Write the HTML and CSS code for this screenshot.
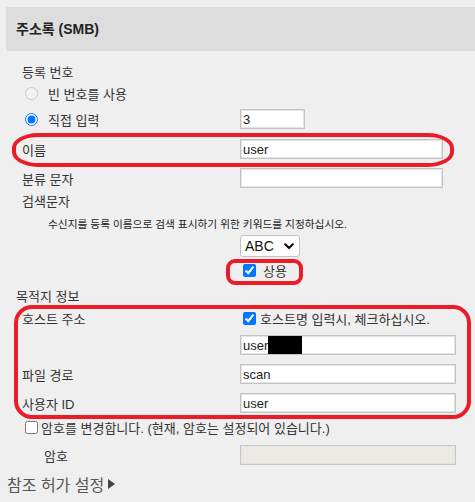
FILE: index.html
```html
<!DOCTYPE html>
<html lang="ko">
<head>
<meta charset="utf-8">
<title>주소록 (SMB)</title>
<link rel="stylesheet" href="styles.css">
</head>
<body>
<div class="page">
  <div class="header">주소록 (SMB)</div>

  <div class="row mt10"><span class="label">등록 번호</span></div>
  <div class="row mt2">
    <label class="opt"><input type="radio" name="num" disabled><span>빈 번호를 사용</span></label>
  </div>
  <div class="row mt6">
    <label class="opt"><input type="radio" name="num" checked><span>직접 입력</span></label>
    <input class="txt w-num" type="text" value="3">
  </div>
  <div class="row mt10">
    <span class="label">이름</span>
    <input class="txt w-mid" type="text" value="user">
  </div>
  <div class="row mt9">
    <span class="label">분류 문자</span>
    <input class="txt w-mid" type="text" value="">
  </div>
  <div class="row mt2"><span class="label">검색문자</span></div>
  <div class="row help mt4">수신지를 등록 이름으로 검색 표시하기 위한 키워드를 지정하십시오.</div>
  <div class="row sel-row mt3">
    <span class="label"></span>
    <div class="select"><span>ABC</span>
      <svg class="chev" width="10" height="7" viewBox="0 0 10 7"><path d="M1.2 1.3 L5 5 L8.8 1.3" fill="none" stroke="#111" stroke-width="2.2" stroke-linecap="round" stroke-linejoin="round"/></svg>
    </div>
  </div>
  <div class="row short mt4">
    <span class="label"></span>
    <label class="chk"><input type="checkbox" checked><span class="chk-text1">상용</span></label>
  </div>
  <div class="row section mt6"><span>목적지 정보</span></div>
  <div class="row mt3">
    <span class="label">호스트 주소</span>
    <label class="chk"><input type="checkbox" checked><span>호스트명 입력시, 체크하십시오.</span></label>
  </div>
  <div class="row mt7">
    <span class="label"></span>
    <div class="field"><input class="txt w-wide" type="text" value="user"><span class="redact"></span></div>
  </div>
  <div class="row mt9">
    <span class="label">파일 경로</span>
    <input class="txt w-wide" type="text" value="scan">
  </div>
  <div class="row mt9">
    <span class="label">사용자 ID</span>
    <input class="txt w-wide" type="text" value="user">
  </div>
  <div class="row short mt5">
    <label class="chk pw"><input type="checkbox"><span>암호를 변경합니다. (현재, 암호는 설정되어 있습니다.)</span></label>
  </div>
  <div class="row mt9">
    <span class="label sub">암호</span>
    <input class="txt w-wide" type="password" disabled>
  </div>
  <div class="row ref mt9"><span>참조 허가 설정</span><span class="tri"></span></div>

  <div class="mark mark-name"></div>
  <div class="mark mark-use"></div>
  <div class="mark mark-dest"></div>
</div>
</body>
</html>
```

FILE: styles.css
```css
html, body {
  margin: 0;
  padding: 0;
  background: #efefef;
}
body {
  font-family: "Liberation Sans", Arial, "Noto Sans CJK KR", sans-serif;
  font-size: 13px;
  color: #333;
}
.page {
  position: relative;
  width: 475px;
  height: 502px;
  overflow: hidden;
}
.header {
  margin: 7px 0 0 6px;
  height: 44px;
  line-height: 44px;
  padding-left: 10px;
  background: #dddddd;
  font-size: 14px;
  font-weight: bold;
  color: #222;
}
.row {
  display: flex;
  align-items: center;
  height: 20px;
  padding-left: 22px;
}
.row.short { height: 18px; }
.row.sel-row { height: 22px; }
.mt2 { margin-top: 2px; }
.mt3 { margin-top: 3px; }
.mt4 { margin-top: 4px; }
.mt5 { margin-top: 5px; }
.mt6 { margin-top: 6px; }
.mt7 { margin-top: 7px; }
.mt9 { margin-top: 9px; }
.mt10 { margin-top: 10px; }
.label {
  width: 218px;
  flex: none;
}
.label.sub { padding-left: 22px; box-sizing: border-box; }
.opt {
  width: 218px;
  flex: none;
  box-sizing: border-box;
  padding-left: 3px;
  display: flex;
  align-items: center;
  gap: 10px;
}
.opt input {
  margin: 0;
  width: 13px;
  height: 13px;
}
.txt {
  box-sizing: border-box;
  height: 20px;
  margin: 0;
  padding: 0 2px;
  border: 1px solid #c3c3c3;
  box-shadow: inset 0 0 0 1px #e4e4e4;
  background: #fff;
  font-family: "Liberation Sans", Arial, sans-serif;
  font-size: 13px;
  color: #222;
  outline: none;
}
.txt:disabled {
  background: #ebebe4;
  border-color: #c8c8c8;
}
.w-num { width: 65px; }
.w-mid { width: 203px; }
.w-wide { width: 216px; }
.field {
  position: relative;
  display: flex;
}
.redact {
  position: absolute;
  left: 28px;
  top: 1px;
  width: 34px;
  height: 18px;
  background: #000;
}
.help {
  height: 18px;
  padding-left: 48px;
  font-size: 10.7px;
  color: #222;
}
.select {
  box-sizing: border-box;
  width: 60px;
  height: 22px;
  display: flex;
  align-items: center;
  justify-content: space-between;
  padding: 0 5px 0 4px;
  background: #fff;
  border: 1px solid #c2c2c2;
  border-radius: 3px;
  font-size: 14px;
  color: #111;
}
.chev { display: block; }
.chk {
  display: flex;
  align-items: center;
  gap: 4px;
  padding-left: 3px;
}
.chk input {
  margin: 0;
  width: 13px;
  height: 13px;
}
.chk-text1 { padding-left: 3px; }
.chk.pw { padding-left: 3px; gap: 3px; }
.section { padding-left: 16px; }
.ref {
  padding-left: 7px;
  font-size: 16px;
  color: #555;
  gap: 4px;
}
.tri {
  width: 0;
  height: 0;
  border-left: 7px solid #444;
  border-top: 5px solid transparent;
  border-bottom: 5px solid transparent;
}
.mark {
  position: absolute;
  box-sizing: border-box;
  border: 4px solid #ea1c27;
}
.mark-name {
  left: 12px;
  top: 133px;
  width: 442px;
  height: 34px;
  border-radius: 26px / 15px;
}
.mark-use {
  left: 226px;
  top: 259px;
  width: 77px;
  height: 26px;
  border-radius: 9px;
}
.mark-dest {
  left: 14px;
  top: 305px;
  width: 457px;
  height: 114px;
  border-radius: 18px;
}
```
